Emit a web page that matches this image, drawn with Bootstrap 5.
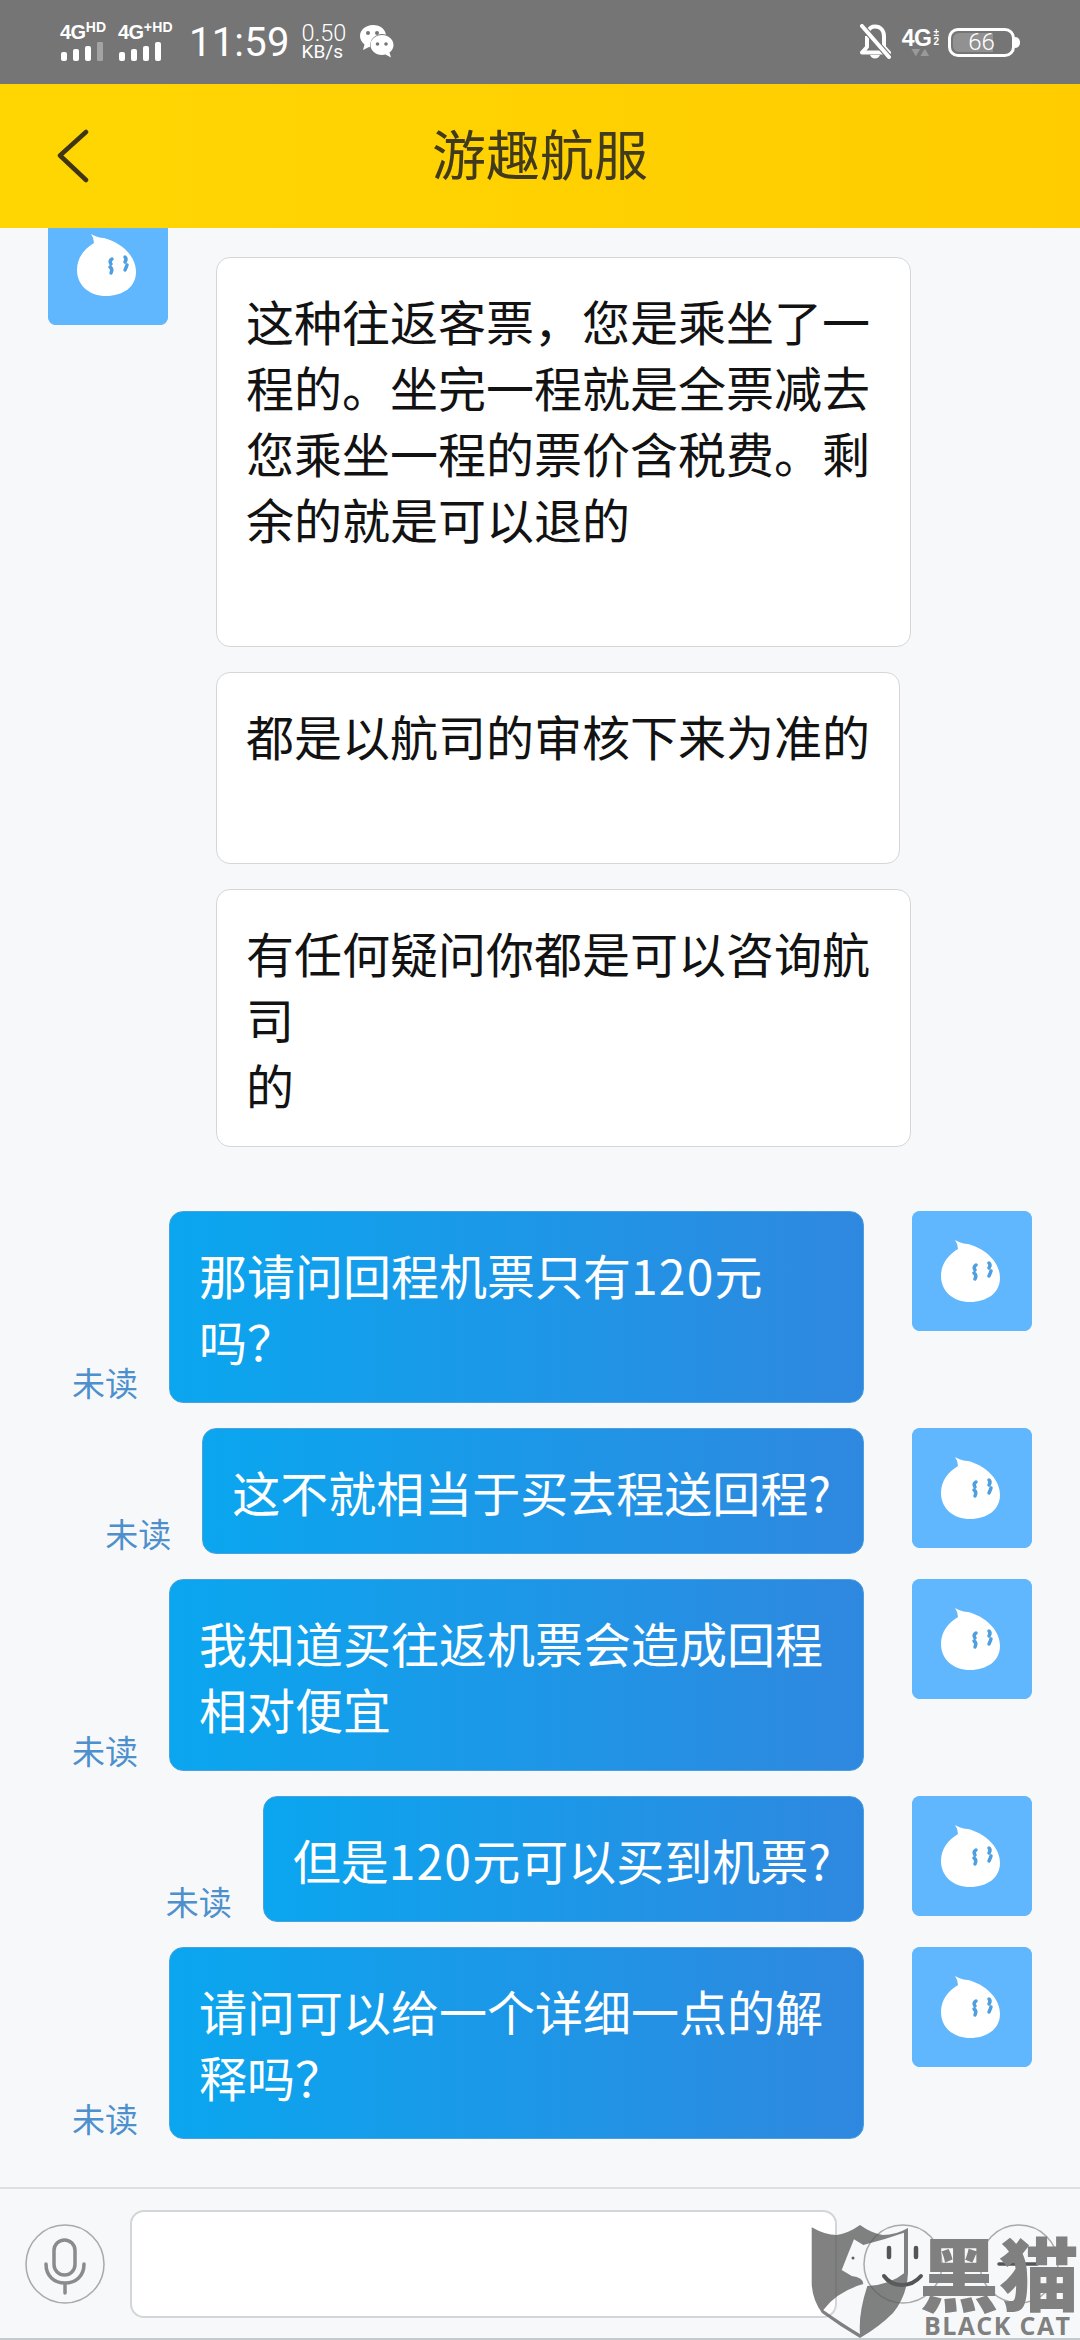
<!DOCTYPE html>
<html lang="zh-CN">
<head>
<meta charset="utf-8">
<title>游趣航服</title>
<link href="https://cdn.jsdelivr.net/npm/bootstrap@5.3.0/dist/css/bootstrap.min.css" rel="stylesheet">
<style>
html,body{margin:0;height:2340px;overflow:hidden}
body{width:1080px;background:#f7f8fa;font-family:"Noto Sans CJK SC","Liberation Sans",sans-serif;color:#111}
.screen{height:2340px;width:1080px;position:relative}
.statusline{height:84px;background:#757575;color:#fff;padding-left:60px;padding-right:60px;flex:none}
.netcol{width:58px}
.nettext{font-family:"Liberation Sans",sans-serif;font-weight:700;font-size:20px;line-height:18px;height:19px;white-space:nowrap;letter-spacing:-.5px}
.nettext sup{font-size:14px;top:-.45em;vertical-align:baseline;position:relative;letter-spacing:.3px}
.sigs{display:block}
.clock{font-family:Roboto,sans-serif;font-weight:400;font-size:40px;line-height:41px;margin-left:13px;letter-spacing:.2px}
.speed{font-family:Roboto,sans-serif;font-weight:300;font-size:23.5px;line-height:20px;margin-left:12px;text-align:left}
.speed span{font-size:19px;font-weight:400;display:block;line-height:18px}
.wxicon{margin-left:13px}
.belltone{margin-right:11px}
.net4g{font-family:"Liberation Sans",sans-serif;font-weight:700;font-size:23px;line-height:20px;letter-spacing:-.5px}
.net4g em{font-style:normal;font-size:10px;display:inline-block;line-height:9px;vertical-align:top;text-align:center;letter-spacing:0;margin-left:2px}
.updown{font-size:9px;line-height:9px;color:#9a9a9a;text-align:center;letter-spacing:0}
.batt{width:67px;height:29px;border:3px solid #fff;border-radius:10px;position:relative;margin-left:9px;margin-right:5px;font-family:Roboto,sans-serif;font-weight:300;font-size:24px;line-height:23px;text-align:center;overflow:visible}
.battfill{position:absolute;left:2px;top:2px;bottom:2px;background:#919191;border-radius:6px 0 0 6px}
.battnum{position:relative}
.battnub{position:absolute;right:-8px;top:6px;width:5px;height:11px;background:#fff;border-radius:0 5px 5px 0}
.topbar{height:144px;flex:none;background:linear-gradient(90deg,#ffd602,#ffcc00);position:relative}
.topname{font-size:54px;line-height:1;font-weight:400;color:#413a1c;margin:0;letter-spacing:0;position:relative;top:-3px}
.backbtn{position:absolute;left:56px;top:45px}
.chatarea{flex:1 1 auto;min-height:0;overflow:hidden;padding:29px 48px 0 48px}
.face{width:120px;height:120px;background:#61b7fd;border-radius:8px;flex:none;display:block}
.face-in{margin-top:-52px;margin-right:48px}
.face-out{margin-left:48px}
.bubble{font-size:48px;line-height:66px;padding:29px;border-width:1px;border-style:solid;border-radius:14px;max-width:695px;word-break:break-all}
.bubble-in{background:#fff;border-color:#d5d6d9;color:#121212}
.bubble-tail{padding-bottom:95px}
.bubble-out{background:linear-gradient(90deg,#0aa6ef,#2f88df);border-color:#4ba0dd;color:#fff}
.digits{letter-spacing:1.2px}
.qmark{letter-spacing:3px}
.incol{gap:25px}
.outcol{gap:25px;margin-top:64px}
.unread{font-size:33px;line-height:33px;color:#4d90cc;margin-right:31px;margin-bottom:4px;white-space:nowrap}
.composer{height:153px;flex:none;border-top:2px solid #dfe0e3;border-bottom:2px solid #c6cacc;background:#f7f8fa;padding-left:25px;position:relative}
.roundbtn{width:80px;height:80px;display:block;flex:none}
.typebox{width:707px;height:108px;background:#fff;border:2px solid #d4d5d8;border-radius:14px;margin-left:25px;margin-right:26px}
.btnsp{margin-left:36px}
.brandmark{position:absolute;left:811px;top:2224px;width:269px;height:116px;pointer-events:none}
.brandcn{position:absolute;left:108px;top:7px;font-size:80px;line-height:78px;font-weight:900;color:#808080;white-space:nowrap}
.branden{position:absolute;left:113px;top:91px;font-family:"Open Sans","Liberation Sans",sans-serif;font-weight:700;font-size:25px;line-height:20px;color:#808080;white-space:nowrap;letter-spacing:1.400px}
</style>
</head>
<body>
<svg width="0" height="0" class="position-absolute">
  <defs>
    <symbol id="blob" viewBox="0 0 120 120">
      <rect width="120" height="120" rx="8" fill="#61b7fd"/>
      <path d="M43 29Q50 33 56 33C72 37 88 50 88 67C88 82 75 91 58 91C42 91 29 81 29 65C29 53 36 44 46 38Q46 33 43 29Z" fill="#fff"/>
      <path d="M64 54q-3 2-1 5M62 62q3 2 1 6M77 52q2 2 0 5M79 60q-1 3-2 5" fill="none" stroke="#4f9fe0" stroke-width="3.500" stroke-linecap="round"/>
    </symbol>
  </defs>
</svg>
<div class="screen d-flex flex-column">
  <div class="statusline d-flex align-items-center">
    <div class="netcol">
      <div class="nettext">4G<sup>HD</sup></div>
      <svg class="sigs" width="46" height="20" viewBox="0 0 46 20"><g fill="#fff"><rect x="1" y="10" width="6" height="9" rx="2"/><rect x="13" y="7" width="6" height="12" rx="2"/><rect x="25" y="4" width="6" height="15" rx="2"/></g><rect x="37" y="0" width="6" height="19" rx="1" fill="#a3a3a3"/></svg>
    </div>
    <div class="netcol">
      <div class="nettext">4G<sup>+HD</sup></div>
      <svg class="sigs" width="46" height="20" viewBox="0 0 46 20"><g fill="#fff"><rect x="1" y="10" width="6" height="9" rx="2"/><rect x="13" y="7" width="6" height="12" rx="2"/><rect x="25" y="4" width="6" height="15" rx="2"/><rect x="37" y="0" width="6" height="19" rx="2"/></g></svg>
    </div>
    <div class="clock">11:59</div>
    <div class="speed">0.50<span>KB/s</span></div>
    <svg class="wxicon" width="36" height="36" viewBox="0 0 36 36">
      <path d="M14 1C6.500 1 1 6 1 12c0 3.500 2 6.500 4.500 8.500L4 26l6-3c1.300.4 2.600.5 4 .5 7.500 0 13-5 13-11.500S21.500 1 14 1Z" fill="#fff"/>
      <circle cx="23" cy="22" r="12" fill="#757575"/>
      <path d="M23 11c6.500 0 11.500 4.500 11.500 10 0 3-1.500 5.700-4 7.500l1.500 5-5.500-3c-1.200.3-2.300.5-3.500.5-6.500 0-11.500-4.500-11.500-10S16.500 11 23 11Z" fill="#fff"/>
      <circle cx="9" cy="9" r="2" fill="#757575"/><circle cx="18" cy="9" r="2" fill="#757575"/>
      <circle cx="18.500" cy="20" r="1.800" fill="#757575"/><circle cx="27" cy="20" r="1.800" fill="#757575"/>
    </svg>
    <div class="ms-auto d-flex align-items-center">
      <svg width="32" height="36" viewBox="0 0 32 36" class="belltone">
        <path d="M9 7c1.500-3 4-4.500 7-4.500 5.500 0 9 4 9 10V23l5 5.500H3L8 23V12" fill="none" stroke="#fff" stroke-width="4" stroke-linejoin="round"/>
        <path d="M11 31c1 2.500 3 3.500 5 3.500s4-1 5-3.500Z" fill="#fff"/>
        <path d="M3 2 30 33" stroke="#757575" stroke-width="6"/>
        <path d="M3 2 30 33" stroke="#fff" stroke-width="4" stroke-linecap="round"/>
      </svg>
      <div>
        <div class="net4g">4G<em>±<br>2</em></div>
        <div class="updown">▼▲</div>
      </div>
      <div class="batt"><div class="battfill" style="width:66%"></div><span class="battnum">66</span><div class="battnub"></div></div>
    </div>
  </div>

  <div class="topbar d-flex align-items-center justify-content-center">
    <svg class="backbtn" width="34" height="54" viewBox="0 0 34 54"><path d="M30 3 4 26.500 30 51" fill="none" stroke="#3f3514" stroke-width="4.500" stroke-linecap="round" stroke-linejoin="round"/></svg>
    <h1 class="topname">游趣航服</h1>
  </div>

  <div class="chatarea">
    <div class="d-flex align-items-start">
      <svg class="face face-in"><use href="#blob"/></svg>
      <div class="d-flex flex-column align-items-start incol">
        <div class="bubble bubble-in bubble-tail">这种往返客票，您是乘坐了一程的。坐完一程就是全票减去您乘坐一程的票价含税费。剩余的就是可以退的</div>
        <div class="bubble bubble-in bubble-tail">都是以航司的审核下来为准的</div>
        <div class="bubble bubble-in">有任何疑问你都是可以咨询航司<br>的</div>
      </div>
    </div>
    <div class="d-flex flex-column outcol">
      <div class="d-flex justify-content-end align-items-start">
        <div class="unread align-self-end">未读</div>
        <div class="bubble bubble-out">那请问回程机票只有<span class="digits">120</span>元吗？</div>
        <svg class="face face-out"><use href="#blob"/></svg>
      </div>
      <div class="d-flex justify-content-end align-items-start">
        <div class="unread align-self-end">未读</div>
        <div class="bubble bubble-out">这不就相当于买去程送回程<span class="qmark">?</span></div>
        <svg class="face face-out"><use href="#blob"/></svg>
      </div>
      <div class="d-flex justify-content-end align-items-start">
        <div class="unread align-self-end">未读</div>
        <div class="bubble bubble-out">我知道买往返机票会造成回程相对便宜</div>
        <svg class="face face-out"><use href="#blob"/></svg>
      </div>
      <div class="d-flex justify-content-end align-items-start">
        <div class="unread align-self-end">未读</div>
        <div class="bubble bubble-out">但是<span class="digits">120</span>元可以买到机票<span class="qmark">?</span></div>
        <svg class="face face-out"><use href="#blob"/></svg>
      </div>
      <div class="d-flex justify-content-end align-items-start">
        <div class="unread align-self-end">未读</div>
        <div class="bubble bubble-out">请问可以给一个详细一点的解释吗？</div>
        <svg class="face face-out"><use href="#blob"/></svg>
      </div>
    </div>
  </div>

  <div class="composer d-flex align-items-center">
    <svg class="roundbtn" viewBox="0 0 80 80"><circle cx="40" cy="40" r="39" fill="none" stroke="#a9a9a9" stroke-width="1.500"/><rect x="29" y="16" width="21" height="35" rx="10.500" fill="none" stroke="#8b8b8b" stroke-width="3.500"/><path d="M21 40c0 12 8 19 19 19s19-7 19-19M40 59v10" fill="none" stroke="#8b8b8b" stroke-width="3.500" stroke-linecap="round"/></svg>
    <div class="typebox"></div>
    <svg class="roundbtn" viewBox="0 0 80 80"><circle cx="40" cy="40" r="39" fill="none" stroke="#a9a9a9" stroke-width="1.500"/><path d="M26 24v9M53 24v9" stroke="#555" stroke-width="4.500" stroke-linecap="round"/><path d="M21 52c5 7 12 9 18 9s13-2 19-9" fill="none" stroke="#555" stroke-width="4" stroke-linecap="round"/></svg>
    <svg class="roundbtn btnsp" viewBox="0 0 80 80"><circle cx="40" cy="40" r="39" fill="none" stroke="#a9a9a9" stroke-width="1.500"/><path d="M39 21v38M20 40h38" stroke="#555" stroke-width="3.500" stroke-linecap="round"/></svg>
  </div>

  <div class="brandmark">
    <svg class="position-absolute top-0 start-0" width="100" height="116" viewBox="0 0 100 116">
      <path fill-rule="evenodd" fill="#5e5e5e" fill-opacity=".78" d="M.7 3.300Q14 11 25.700 11 38 9 49 1 60 9 72 11 85 11 97 4V49Q96 72 82 89 68 103 49 114 30 103 11 89 1 75 .7 59Z M43 15.300 52.300 21Q72.300 16 93 8.700V49.300Q79 61 56.300 62 47.300 89.300 49 110 32 100 12.300 86 25.700 67.700 52.300 60 52.300 53.300 40.700 52L30.700 46 37.300 29.300Z"/>
      <circle cx="42" cy="34" r="1.500" fill="#5e5e5e"/>
    </svg>
    <div class="brandcn">黑猫</div>
    <div class="branden">BLACK CAT</div>
  </div>
</div>
</body>
</html>
